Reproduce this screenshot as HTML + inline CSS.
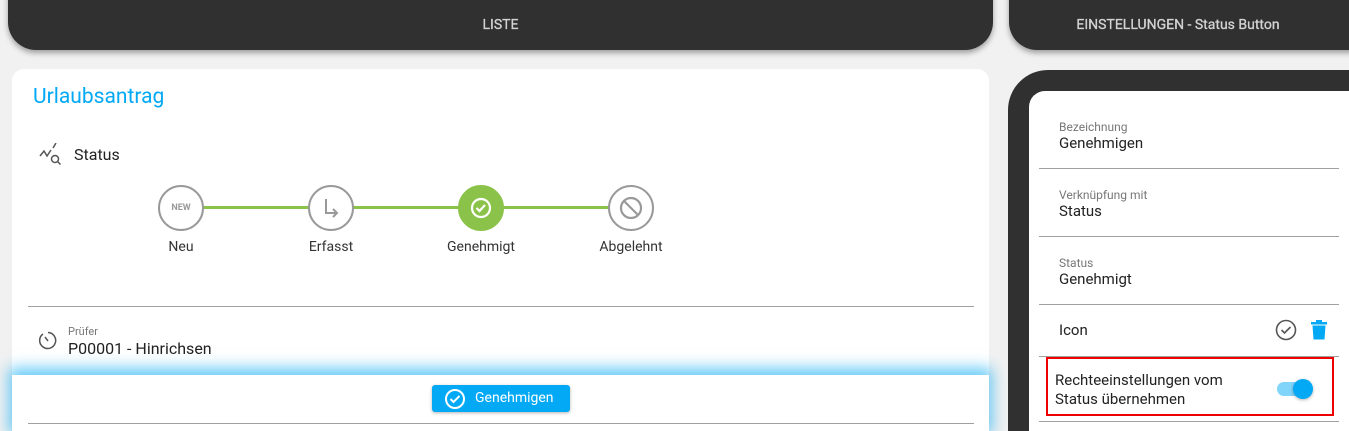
<!DOCTYPE html>
<html style="width:1349px;height:431px;overflow:hidden"><head><meta charset="utf-8"><style>
*{margin:0;padding:0;box-sizing:border-box}
body{width:1349px;height:431px;overflow:hidden;background:#f1f1f1;font-family:Roboto,"Liberation Sans",sans-serif;position:relative;color:#222}
.abs{position:absolute}
.bar{background:#303030;color:#d4d4d4;font-size:14px;text-align:center;box-shadow:0 3px 6px rgba(0,0,0,.35);-webkit-text-stroke:0.3px #d4d4d4}
.line{position:absolute;height:1px;background:#a0a0a0}
.lbl{font-size:12px;color:#777}
.val{font-size:15px;color:#222}
.circ{position:absolute;width:46px;height:46px;border-radius:50%;border:2px solid #999;background:#fff;top:185px}
.st{position:absolute;top:239px;font-size:14px;color:#333;width:120px;text-align:center}
</style></head><body>
<div class="abs bar" style="left:8px;top:-10px;width:985px;height:60px;border-radius:0 0 28px 28px;line-height:70px">LISTE</div>
<div class="abs bar" style="left:1009px;top:-10px;width:360px;height:60px;border-radius:0 0 0 28px;line-height:70px;padding-right:22px">EINSTELLUNGEN - Status Button</div>

<div class="abs" style="left:12px;top:69px;width:977px;height:380px;background:#fff;border-radius:12px"></div>
<div class="abs" style="left:33px;top:85px;font-size:21px;color:#03a9f4">Urlaubsantrag</div>
<svg class="abs" style="left:39px;top:143px" width="24" height="24" viewBox="0 0 24 24" fill="none" stroke="#555" stroke-width="1.5"><path d="M1 13l4-5 3 5 4-6M14 5l3-5"/><circle cx="16" cy="16" r="3.5"/><path d="M18.5 18.5l3 3"/></svg>
<div class="abs" style="left:74px;top:145px;font-size:16px">Status</div>
<div class="abs" style="left:181px;top:206px;width:300px;height:3px;background:#8bc34a"></div>
<div class="abs" style="left:481px;top:206px;width:150px;height:3px;background:#8bc34a"></div>
<div class="circ" style="left:158px"><div style="font-size:9px;font-weight:bold;color:#999;text-align:center;line-height:42px">NEW</div></div>
<div class="circ" style="left:308px"><svg width="42" height="42" viewBox="0 0 42 42" fill="none" stroke="#999" stroke-width="2"><path d="M16 12v14h11M23 22l4 4-4 4"/></svg></div>
<div class="circ" style="left:458px;border-color:#8bc34a;background:#8bc34a"><svg width="42" height="42" viewBox="0 0 42 42" fill="none" stroke="#fff" stroke-width="2.2"><circle cx="21" cy="21" r="9"/><path d="M16.5 21l3 3 5.5-6"/></svg></div>
<div class="circ" style="left:608px"><svg width="42" height="42" viewBox="0 0 42 42" fill="none" stroke="#999" stroke-width="2.2"><circle cx="21" cy="21" r="10"/><path d="M14 14l14 14"/></svg></div>
<div class="st" style="left:121px">Neu</div>
<div class="st" style="left:271px">Erfasst</div>
<div class="st" style="left:421px">Genehmigt</div>
<div class="st" style="left:571px">Abgelehnt</div>
<div class="line" style="left:28px;top:306px;width:946px"></div>
<svg class="abs" style="left:37px;top:329px" width="22" height="22" viewBox="0 0 22 22" fill="none" stroke="#555" stroke-width="1.5"><path d="M6 5a8 8 0 1 0 5-1.5"/><path d="M8 8l3 4"/></svg>
<div class="abs lbl" style="left:68px;top:325px;font-size:11px">Prüfer</div>
<div class="abs val" style="left:68px;top:339px;font-size:16px">P00001 - Hinrichsen</div>
<div class="abs" style="left:12px;top:375px;width:977px;height:60px;background:#fff;box-shadow:0 -4px 14px 3px rgba(3,169,244,.6)"></div>
<div class="abs" style="left:432px;top:385px;width:138px;height:27px;background:#03a9f4;border-radius:3px;color:#fff;font-size:14px;line-height:27px;padding-left:43px;box-shadow:0 1px 3px rgba(0,0,0,.3)">Genehmigen
<svg class="abs" style="left:12px;top:3px" width="22" height="22" viewBox="0 0 22 22" fill="none" stroke="#fff" stroke-width="2"><circle cx="11" cy="11" r="9"/><path d="M6.5 11l3 3 6-6"/></svg></div>
<div class="line" style="left:28px;top:423px;width:946px"></div>

<div class="abs" style="left:1008px;top:70px;width:360px;height:380px;background:#303030;border-radius:40px 0 0 0"></div>
<div class="abs" style="left:1029px;top:91px;width:330px;height:360px;background:#fff;border-radius:16px 0 0 0"></div>
<div class="abs lbl" style="left:1059px;top:120px">Bezeichnung</div>
<div class="abs val" style="left:1059px;top:134px">Genehmigen</div>
<div class="line" style="left:1039px;top:168px;width:300px"></div>
<div class="abs lbl" style="left:1059px;top:188px">Verknüpfung mit</div>
<div class="abs val" style="left:1059px;top:202px">Status</div>
<div class="line" style="left:1039px;top:236px;width:300px"></div>
<div class="abs lbl" style="left:1059px;top:256px">Status</div>
<div class="abs val" style="left:1059px;top:270px">Genehmigt</div>
<div class="line" style="left:1039px;top:304px;width:300px"></div>
<div class="abs val" style="left:1059px;top:321px">Icon</div>
<svg class="abs" style="left:1275px;top:319px" width="22" height="22" viewBox="0 0 22 22" fill="none" stroke="#555" stroke-width="1.6"><circle cx="11" cy="11" r="9.5"/><path d="M6.5 11l3 3 6-6"/></svg>
<svg class="abs" style="left:1311px;top:320px" width="16" height="20" viewBox="0 0 16 20" fill="#03a9f4"><rect x="0" y="2" width="16" height="2.5"/><rect x="5" y="0" width="6" height="3"/><path d="M1.5 5.5h13l-1 14h-11z"/></svg>
<div class="line" style="left:1039px;top:356px;width:300px"></div>
<div class="abs" style="left:1046px;top:357px;width:288px;height:59px;border:2px solid #e00"></div>
<div class="abs val" style="left:1055px;top:371px;line-height:19px">Rechteeinstellungen vom<br>Status übernehmen</div>
<div class="abs" style="left:1277px;top:382px;width:34px;height:14px;border-radius:7px;background:#81d4fa"></div>
<div class="abs" style="left:1293px;top:379px;width:20px;height:20px;border-radius:50%;background:#03a9f4;box-shadow:0 1px 3px rgba(0,0,0,.3)"></div>
<div class="line" style="left:1039px;top:421px;width:300px"></div>
</body></html>
